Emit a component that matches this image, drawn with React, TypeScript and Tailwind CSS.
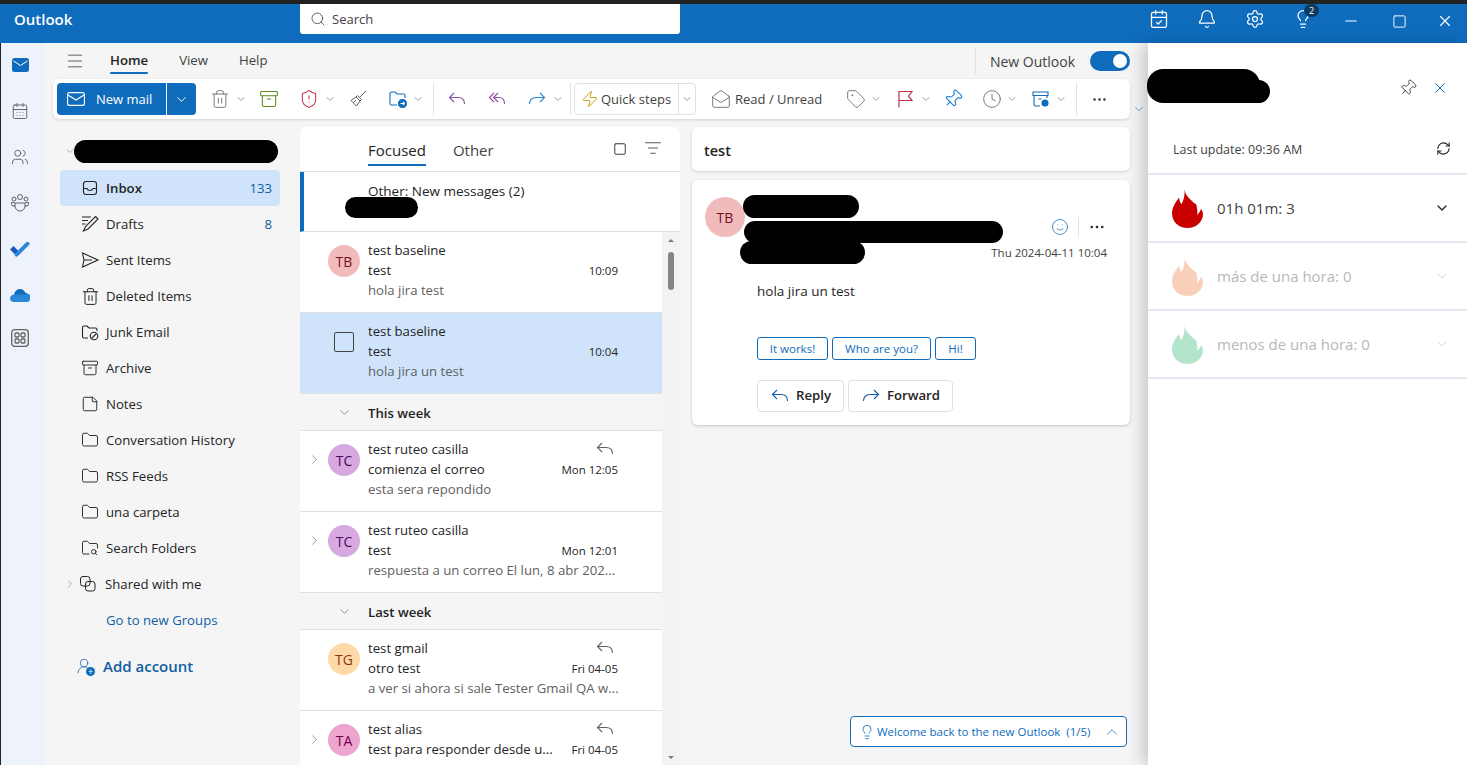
import React from 'react'
import {
  Archive, Bell, CalendarCheck, CalendarDays, ChevronDown, ChevronRight, ChevronUp, Clock, Ellipsis,
  Folder, FolderSearch, Lightbulb, ListFilter, MailOpen, Menu, Minus, Pin, RefreshCw, Search,
  Settings, ShieldAlert, Smile, Square, StickyNote, Tag, Trash2, UserRound, Users, X, Zap,
} from 'lucide-react'

const Chev = ({ className = '' }: { className?: string }) => (
  <ChevronDown size={12} strokeWidth={1.25} className={`text-[#616161] ${className}`} />
)

const ReplyIcon = ({ className = '' }: { className?: string }) => (
  <svg width="20" height="20" viewBox="0 0 20 20" fill="none" stroke="currentColor" strokeWidth="1.1" className={className}>
    <path d="M7 4 2.5 8.5 7 13M2.5 8.5H11c4 0 6.5 2.5 6.5 6.5" />
  </svg>
)

const ForwardIcon = ({ className = '' }: { className?: string }) => (
  <svg width="20" height="20" viewBox="0 0 20 20" fill="none" stroke="currentColor" strokeWidth="1.1" className={className}>
    <path d="M13 4l4.5 4.5L13 13M17.5 8.5H9c-4 0-6.5 2.5-6.5 6.5" />
  </svg>
)

const Flame = ({ color }: { color: string }) => (
  <svg width="31" height="39" viewBox="0 0 31 39" className="shrink-0">
    <path
      fill={color}
      d="M12.5 0C13 6 17 9 21 13c5 4 10 7 10 12 0 8-7 14-15.5 14C7 39 0 33 0 24.5 0 18 4 13 7 8.5c.5 2.5 1 5.5 2.5 6.5C12 11 13 5 12.5 0Z"
    />
    <path fill="#fff" d="M24 15c1 4 2 7 1 11 2-2 3.500-4 4.200-6.500C27.500 18 25.500 16.500 24 15Z" />
  </svg>
)

const line = { fill: 'none', stroke: 'currentColor', strokeWidth: 1.1 }

const folders = [
  {
    name: 'Inbox',
    icon: (
      <svg width="18" height="18" viewBox="0 0 18 18" {...line}>
        <rect x="2.500" y="2.500" width="13" height="13" rx="2.500" />
        <path d="M2.500 9.500h3.500c.5 1.500 1.500 2 3 2s2.500-.5 3-2h3.500" />
      </svg>
    ),
    count: '133',
    active: true,
  },
  {
    name: 'Drafts',
    icon: (
      <svg width="20" height="20" viewBox="0 0 20 20" {...line}>
        <path d="M2 3h9M2 6.500h6M2 10h3.500" />
        <path d="M15.500 2.500 18 5 8 15l-4.500 2L5.500 12.500Z" />
      </svg>
    ),
    count: '8',
  },
  {
    name: 'Sent Items',
    icon: (
      <svg width="20" height="20" viewBox="0 0 20 20" {...line}>
        <path d="M2.500 3 18 10 2.500 17 4 10ZM4 10h8" />
      </svg>
    ),
  },
  { name: 'Deleted Items', icon: <Trash2 size={19} strokeWidth={1.25} /> },
  {
    name: 'Junk Email',
    icon: (
      <svg width="18" height="18" viewBox="0 0 18 18" {...line}>
        <path d="M7 15H3a1.500 1.500 0 0 1-1.500-1.500v-9A1.500 1.500 0 0 1 3 3h3l2 2h6.500A1.500 1.500 0 0 1 16 6.500V8" />
        <circle cx="13" cy="13" r="3.800" />
        <path d="m10.500 15.500 5-5" />
      </svg>
    ),
  },
  { name: 'Archive', icon: <Archive size={18} strokeWidth={1.25} /> },
  { name: 'Notes', icon: <StickyNote size={18} strokeWidth={1.25} /> },
  { name: 'Conversation History', icon: <Folder size={18} strokeWidth={1.25} /> },
  { name: 'RSS Feeds', icon: <Folder size={18} strokeWidth={1.25} /> },
  { name: 'una carpeta', icon: <Folder size={18} strokeWidth={1.25} /> },
  { name: 'Search Folders', icon: <FolderSearch size={18} strokeWidth={1.25} /> },
]

type Mail = { initials: string; bg: string; fg: string; from: string; subject: string; time: string; preview: string; chevron?: boolean; replied?: boolean; selected?: boolean }

const Avatar = ({ m }: { m: Mail }) => (
  <div className={`mt-[13px] flex h-8 w-8 items-center justify-center rounded-full text-[14px] ${m.bg} ${m.fg}`}>{m.initials}</div>
)

const Row = ({ m }: { m: Mail }) => (
  <div className={`flex h-[81px] shrink-0 border-b border-[#e0e0e0] pr-[44px] ${m.selected ? 'bg-[#cfe4fa]' : 'bg-white'}`}>
    <div className="flex w-[28px] justify-center pt-[21px]">
      {m.chevron && <ChevronRight size={15} strokeWidth={1} className="text-[#616161]" />}
    </div>
    <div className="w-[40px]">
      {m.selected ? <div className="ml-[6px] mt-[19px] h-5 w-5 rounded-[2px] border border-[#424242]" /> : <Avatar m={m} />}
    </div>
    <div className="min-w-0 flex-1 pt-2 text-[13.200px] leading-5 text-[#242424]">
      <div className="flex h-5 items-center justify-between">
        <span>{m.from}</span>
        {m.replied && <ReplyIcon className="mr-[3px] text-[#616161]" />}
      </div>
      <div className="flex h-5 items-center justify-between">
        <span>{m.subject}</span>
        <span className="pt-[1px] text-[11.500px]">{m.time}</span>
      </div>
      <div className="h-5 whitespace-nowrap text-[#616161]">{m.preview}</div>
    </div>
  </div>
)

const GroupHead = ({ label }: { label: string }) => (
  <div className="flex h-[37px] shrink-0 items-center border-b border-[#e0e0e0] bg-[#f5f5f5]">
    <div className="flex w-[68px] justify-end pr-[16px]">
      <ChevronDown size={15} strokeWidth={1} className="text-[#616161]" />
    </div>
    <span className="pt-[3px] text-[13.200px] font-semibold text-[#242424]">{label}</span>
  </div>
)

const mailsA: Mail[] = [
  { initials: 'TB', bg: 'bg-[#f1bbbc]', fg: 'text-[#750b1c]', from: 'test baseline', subject: 'test', time: '10:09', preview: 'hola jira test' },
  { initials: 'TB', bg: 'bg-[#f1bbbc]', fg: 'text-[#750b1c]', from: 'test baseline', subject: 'test', time: '10:04', preview: 'hola jira un test', selected: true },
]
const mailsB: Mail[] = [
  { initials: 'TC', bg: 'bg-[#d8a9e0]', fg: 'text-[#4a0a5e]', from: 'test ruteo casilla', subject: 'comienza el correo', time: 'Mon 12:05', preview: 'esta sera repondido', chevron: true, replied: true },
  { initials: 'TC', bg: 'bg-[#d8a9e0]', fg: 'text-[#4a0a5e]', from: 'test ruteo casilla', subject: 'test', time: 'Mon 12:01', preview: 'respuesta a un correo El lun, 8 abr 202...', chevron: true },
]
const mailsC: Mail[] = [
  { initials: 'TG', bg: 'bg-[#ffd9a8]', fg: 'text-[#8a3707]', from: 'test gmail', subject: 'otro test', time: 'Fri 04-05', preview: 'a ver si ahora si sale Tester Gmail QA w...', replied: true },
  { initials: 'TA', bg: 'bg-[#eda5d0]', fg: 'text-[#77004d]', from: 'test alias', subject: 'test para responder desde u...', time: 'Fri 04-05', preview: '', chevron: true, replied: true },
]

const Section = ({ color, label, dim }: { color: string; label: string; dim?: boolean }) => (
  <div className="flex h-[68px] items-center border-b-2 border-[#e4e8f0] pl-[24px] pr-[17px]">
    <Flame color={color} />
    <span className={`ml-[14px] flex-1 text-[15px] ${dim ? 'text-[#b8b8b8]' : 'text-[#424242]'}`}>{label}</span>
    <ChevronDown size={16} strokeWidth={dim ? 1.5 : 2} className={dim ? 'text-[#d6d6d6]' : 'text-[#242424]'} />
  </div>
)

const App = () => {
  return (
    <div className="flex h-[765px] w-[1467px] flex-col overflow-hidden bg-[#f5f5f5] font-['Open_Sans',sans-serif] text-[13.200px] text-[#242424]">
      <div className="h-[4px] shrink-0 bg-[#222222]" />

      {/* title bar */}
      <div className="flex h-[39px] shrink-0 bg-[#0f6cbd] text-white">
        <div className="w-[300px] pl-[14px] pt-[4px] text-[15px] font-semibold">Outlook</div>
        <div className="flex h-[30px] w-[380px] items-center rounded-b-[3px] bg-white pl-[10px] text-[#424242]">
          <Search size={16} strokeWidth={1.25} />
          <span className="ml-[6px] pt-[1px] text-[13px]">Search</span>
        </div>
        <div className="flex-1" />
        <div className="flex w-[332px]">
          {[<CalendarCheck size={20} strokeWidth={1.5} />, <Bell size={20} strokeWidth={1.5} />, <Settings size={20} strokeWidth={1.5} />].map((ic, i) => (
            <div key={i} className="flex h-[30px] w-[48px] items-center justify-center">{ic}</div>
          ))}
          <div className="relative flex h-[30px] w-[48px] items-center justify-center">
            <Lightbulb size={20} strokeWidth={1.5} />
            <span className="absolute left-[25px] top-0 flex h-[13px] w-[15px] items-center justify-center rounded-full bg-[#0c3b5e] text-[9px]">2</span>
          </div>
          <div className="flex h-[34px] w-[48px] items-center justify-center"><Minus size={18} strokeWidth={1.5} /></div>
          <div className="flex h-[34px] w-[48px] items-center justify-center"><Square size={15} strokeWidth={1.5} /></div>
          <div className="flex h-[34px] w-[44px] items-center justify-center"><X size={18} strokeWidth={1.5} /></div>
        </div>
      </div>

      <div className="flex min-h-0 flex-1">
        {/* app rail */}
        <div className="flex w-[45px] shrink-0 flex-col items-center border-l border-[#222222] bg-[#eef3fb] pr-[6px] pt-[12px] text-[#616161]">
          <div className="flex h-[20px] items-center">
            <svg width="17" height="14" viewBox="0 0 17 14">
              <rect width="17" height="14" rx="2.500" fill="#0f6cbd" />
              <path d="M1.500 3 8.500 7.500 15.500 3" fill="none" stroke="#fff" strokeWidth="1" />
            </svg>
          </div>
          <div className="mt-[26px] flex h-[20px] items-center"><CalendarDays size={18} strokeWidth={1.25} /></div>
          <div className="mt-[26px] flex h-[20px] items-center"><Users size={18} strokeWidth={1.25} /></div>
          <div className="mt-[26px] flex h-[20px] items-center">
            <svg width="20" height="20" viewBox="0 0 20 20" fill="none" stroke="currentColor" strokeWidth="1">
              <circle cx="10" cy="4" r="2.500" />
              <circle cx="4" cy="6" r="2" />
              <circle cx="16" cy="6" r="2" />
              <path d="M5 10h10v3a5 5 0 0 1-10 0v-3ZM5 13H3a1.500 1.500 0 0 1-1.500-1.500V9.500h3M15 13h2a1.500 1.500 0 0 0 1.500-1.500V9.500h-3" />
            </svg>
          </div>
          <div className="mt-[26px] flex h-[20px] items-center">
            <svg width="20" height="16" viewBox="0 0 20 16">
              <path d="M0 8.500 3.500 5 8 9.500 6 13 4.500 13Z" fill="#185abd" />
              <path d="M4.500 13 16 1.500c1-1 2-1 3 0s1 1.500 0 2.500L8 15c-1 1-2 1-3 0Z" fill="#2b88d8" />
            </svg>
          </div>
          <div className="mt-[26px] flex h-[20px] items-center">
            <svg width="20" height="14" viewBox="0 0 20 14">
              <path d="M4 7c.5-3.500 3-6 6-6 2.500 0 4.500 1.500 5 3.500C17.500 5 20 7 20 10H4Z" fill="#0f6cbd" />
              <path d="M0 10.500C0 8 2 6.500 4.500 6.500H20V11c0 1.500-1 3-3 3H3.500C1.500 14 0 12.500 0 10.500Z" fill="#2b88d8" />
            </svg>
          </div>
          <div className="mt-[23px] flex h-[20px] items-center">
            <svg width="18" height="18" viewBox="0 0 18 18" fill="none" stroke="currentColor" strokeWidth="1.300">
              <rect x=".7" y=".7" width="16.600" height="16.600" rx="3" />
              <rect x="4" y="4" width="4" height="4" rx="1" />
              <rect x="10" y="4" width="4" height="4" rx="1" />
              <rect x="4" y="10" width="4" height="4" rx="1" />
              <rect x="10" y="10" width="4" height="4" rx="1" />
            </svg>
          </div>
        </div>

        {/* middle column */}
        <div className="flex w-[1103px] shrink-0 flex-col">
          <div className="flex h-[36px] shrink-0 items-center text-[#242424]">
            <Menu size={20} strokeWidth={1} className="ml-[20px] text-[#424242]" />
            <div className="relative ml-[25px] font-semibold">
              Home
              <div className="absolute -bottom-[3px] left-0 h-[2px] w-full rounded bg-[#0f6cbd]" />
            </div>
            <span className="ml-[31px] text-[#424242]">View</span>
            <span className="ml-[31px] text-[#424242]">Help</span>
            <div className="ml-auto h-[26px] border-l border-[#e0e0e0]" />
            <span className="ml-[14px] text-[14px] font-medium text-[#424242]">New Outlook</span>
            <div className="ml-[15px] mr-[18px] flex h-[20px] w-[40px] items-center justify-end rounded-full bg-[#0f6cbd] pr-[3px]">
              <div className="h-[14px] w-[14px] rounded-full bg-white" />
            </div>
          </div>

          {/* ribbon */}
          <div className="flex shrink-0 items-start">
            <div className="ml-[8px] flex h-[40px] w-[1077px] items-center rounded-md bg-white pl-[4px] shadow-[0_1px_3px_rgba(0,0,0,0.15)]">
              <div className="flex h-[32px] w-[139px] rounded-[4px] bg-[#0f6cbd] text-white">
                <div className="flex w-[110px] items-center border-r border-white pl-[10px]">
                  <svg width="18" height="14" viewBox="0 0 18 14" fill="none" stroke="currentColor" strokeWidth="1.100">
                    <rect x=".6" y=".6" width="16.800" height="12.800" rx="2" />
                    <path d="M1 3l8 5 8-5" />
                  </svg>
                  <span className="ml-[11px] pt-[2px] text-[13px] font-medium">New mail</span>
                </div>
                <div className="flex flex-1 items-center justify-center"><ChevronDown size={15} strokeWidth={1.5} /></div>
              </div>
              <Trash2 size={20} strokeWidth={1} className="ml-[14px] text-[#616161]" />
              <Chev className="ml-[5px]" />
              <Archive size={20} strokeWidth={1.25} className="ml-[12px] text-[#5c8a1e]" />
              <ShieldAlert size={20} strokeWidth={1.25} className="ml-[20px] text-[#c4314b]" />
              <Chev className="ml-[5px]" />
              <svg width="20" height="20" viewBox="0 0 20 20" fill="none" stroke="#616161" strokeWidth="1" className="ml-[12px]">
                <path d="M18 2 11.500 8.500M9.500 6.500l4 4-1.500 1.500-4-4ZM8 8 3 11.500 8.500 17 12 12M5.500 13.500 8 11" />
              </svg>
              <svg width="20" height="20" viewBox="0 0 20 20" fill="none" stroke="#0f6cbd" strokeWidth="1.100" className="ml-[20px]">
                <path d="M9 16H3.500A1.500 1.500 0 0 1 2 14.500v-10A1.500 1.500 0 0 1 3.500 3H7l2 2h6.500A1.500 1.500 0 0 1 17 6.500V9" />
                <circle cx="14.500" cy="14.500" r="4" fill="#0f6cbd" />
                <path d="M12.500 14.500h4M15 13l1.500 1.500L15 16" stroke="#fff" />
              </svg>
              <Chev className="ml-[4px]" />
              <div className="ml-[9px] h-[32px] border-l border-[#e0e0e0]" />
              <ReplyIcon className="ml-[13px] text-[#8e4aa8]" />
              <svg width="20" height="20" viewBox="0 0 20 20" fill="none" stroke="#8e4aa8" strokeWidth="1.100" className="ml-[20px]">
                <path d="M7 4 2.500 8.500 7 13M11 4 6.500 8.500 11 13M6.500 8.500H12c3.500 0 5.500 2.500 5.500 6.500" />
              </svg>
              <ForwardIcon className="ml-[20px] text-[#2b88d8]" />
              <Chev className="ml-[5px]" />
              <div className="ml-[6px] h-[32px] border-l border-[#e0e0e0]" />
              <div className="ml-[3px] flex h-[32px] w-[122px] items-center rounded-[4px] border border-[#e0e0e0] pl-[6px]">
                <Zap size={18} strokeWidth={1.25} className="text-[#c19c00]" />
                <span className="ml-[2px] w-[77px] whitespace-nowrap pt-[2px] text-[13px] text-[#424242]">Quick steps</span>
                <div className="flex h-full flex-1 items-center justify-center border-l border-[#e0e0e0]"><Chev /></div>
              </div>
              <MailOpen size={20} strokeWidth={1} className="ml-[15px] text-[#616161]" />
              <span className="ml-[4px] w-[89px] whitespace-nowrap pt-[2px] text-[13px] text-[#424242]">Read / Unread</span>
              <Tag size={20} strokeWidth={1} className="ml-[22px] text-[#616161]" />
              <Chev className="ml-[4px]" />
              <svg width="20" height="20" viewBox="0 0 20 20" fill="none" stroke="#c4314b" strokeWidth="1.200" className="ml-[13px]">
                <path d="M4 18.500V2.500h13l-3.500 4.700L17 11.500H4" />
              </svg>
              <Chev className="ml-[5px]" />
              <Pin size={20} strokeWidth={1.25} className="ml-[11px] rotate-45 text-[#0f78d4]" />
              <Clock size={20} strokeWidth={1} className="ml-[19px] text-[#616161]" />
              <Chev className="ml-[4px]" />
              <svg width="20" height="20" viewBox="0 0 20 20" fill="none" stroke="#0f6cbd" strokeWidth="1.100" className="ml-[13px]">
                <path d="M2 3h15v3.500H2ZM3 6.500v9A1.500 1.500 0 0 0 4.500 17H9M16 6.500V9M7.500 10h3" />
                <circle cx="14" cy="14" r="3" fill="#0f6cbd" />
              </svg>
              <Chev className="ml-[4px]" />
              <div className="ml-[9px] h-[32px] border-l border-[#e0e0e0]" />
              <Ellipsis size={17} strokeWidth={1.5} className="ml-[14px] text-[#242424]" />
            </div>
            <ChevronDown size={14} strokeWidth={1} className="ml-[2px] mt-[23px] text-[#0f6cbd]" />
          </div>

          <div className="mt-[8px] flex min-h-0 flex-1">
            {/* folders */}
            <div className="w-[255px] shrink-0">
              <div className="flex h-[43px] items-start pl-[19px]">
                <ChevronDown size={12} strokeWidth={1} className="mt-[18px] text-[#616161]" />
                <div className="-ml-[2px] mt-[13px] h-[23px] w-[204px] rounded-full bg-black" />
              </div>
              {folders.map((f) => (
                <div
                  key={f.name}
                  className={`ml-[15px] flex h-[36px] w-[220px] items-center rounded-[4px] pl-[20px] pr-[8px] ${f.active ? 'bg-[#cfe4fa] font-semibold' : ''}`}
                >
                  <span className="flex w-[20px] justify-center text-[#242424]">{f.icon}</span>
                  <span className="ml-[6px] flex-1 whitespace-nowrap pt-[2px]">{f.name}</span>
                  {f.count && <span className="pt-[2px] font-normal text-[#115ea3]">{f.count}</span>}
                </div>
              ))}
              <div className="ml-[15px] flex h-[36px] w-[220px] items-center">
                <ChevronRight size={12} strokeWidth={1} className="ml-[4px] text-[#616161]" />
                <svg width="18" height="18" viewBox="0 0 18 18" fill="none" stroke="currentColor" strokeWidth="1" className="ml-[3px]">
                  <rect x="1.500" y="1.500" width="9.500" height="9.500" rx="2.500" />
                  <rect x="6.500" y="6.500" width="9.500" height="9.500" rx="2.500" />
                </svg>
                <span className="ml-[8px] pt-[2px]">Shared with me</span>
              </div>
              <div className="ml-[15px] flex h-[36px] w-[220px] items-center pl-[46px] pt-[2px] text-[#115ea3]">Go to new Groups</div>
              <div className="ml-[30px] mt-[10px] flex h-[36px] items-center text-[#115ea3]">
                <span className="relative">
                  <UserRound size={18} strokeWidth={1} />
                  <span className="absolute -bottom-[1px] -right-[2px] flex h-[9px] w-[9px] items-center justify-center rounded-full bg-[#0f6cbd] text-[9px] leading-none text-white">+</span>
                </span>
                <span className="ml-[10px] text-[15px] font-semibold">Add account</span>
              </div>
            </div>

            {/* message list */}
            <div className="relative flex w-[380px] shrink-0 flex-col rounded-t-md bg-white">
              <div className="flex h-[45px] shrink-0 border-b border-[#e0e0e0] pl-[68px]">
                <div className="relative mt-[12px] h-[25px] text-[15px] font-medium">
                  Focused
                  <div className="absolute -bottom-[2px] left-0 h-[2px] w-full bg-[#0f6cbd]" />
                </div>
                <span className="ml-[27px] mt-[12px] text-[15px] text-[#424242]">Other</span>
                <Square size={14} strokeWidth={1.5} className="ml-[119px] mt-[15px]" />
                <ListFilter size={18} strokeWidth={1} className="ml-[17px] mt-[12px]" />
              </div>
              <div className="flex h-[60px] shrink-0 border-b border-[#e0e0e0] border-l-4 border-l-[#0f6cbd] pl-[64px] pt-[9px] text-[13.500px] font-medium">
                Other: New messages (2)
              </div>
              <div className="absolute left-[45px] top-[70px] h-[21px] w-[73px] rounded-full bg-black" />
              <div className="flex min-h-0 flex-1">
                <div className="w-[362px] shrink-0 overflow-hidden">
                  {mailsA.map((m, i) => <Row key={i} m={m} />)}
                  <GroupHead label="This week" />
                  {mailsB.map((m, i) => <Row key={i} m={m} />)}
                  <GroupHead label="Last week" />
                  {mailsC.map((m, i) => <Row key={i} m={m} />)}
                </div>
                <div className="flex flex-1 flex-col items-center justify-between bg-[#f3f3f3] pb-[6px] pt-[7px]">
                  <div className="flex flex-col items-center">
                    <div className="h-0 w-0 border-x-[3px] border-b-[3px] border-x-transparent border-b-[#7a7a7a]" />
                    <div className="mt-[10px] h-[38px] w-[6px] rounded-full bg-[#858585]" />
                  </div>
                  <div className="h-0 w-0 border-x-[3px] border-t-[3px] border-x-transparent border-t-[#7a7a7a]" />
                </div>
              </div>
            </div>

            {/* reading pane */}
            <div className="ml-[12px] flex w-[438px] shrink-0 flex-col">
              <div className="flex h-[44px] shrink-0 items-center rounded-md bg-white pl-[12px] pt-[3px] text-[14.500px] font-semibold shadow-[0_1px_3px_rgba(0,0,0,0.15)]">test</div>
              <div className="relative mt-[9px] h-[245px] shrink-0 rounded-md bg-white shadow-[0_1px_3px_rgba(0,0,0,0.2)]">
                <div className="flex h-[90px] justify-between pl-[13px] pr-[23px] pt-[17px]">
                  <div className="flex h-10 w-10 items-center justify-center rounded-full bg-[#f1bbbc] text-[14px] text-[#750b1c]">TB</div>
                  <div className="flex flex-col items-end">
                    <div className="mt-[20px] flex h-5 items-center">
                      <Smile size={18} strokeWidth={1} className="text-[#0f6cbd]" />
                      <div className="ml-[9px] h-[20px] border-l border-[#e0e0e0]" />
                      <Ellipsis size={18} strokeWidth={1.5} className="ml-[9px] mr-[1px]" />
                    </div>
                    <div className="mt-[8px] text-[11.500px] leading-4 text-[#424242]">Thu 2024-04-11 10:04</div>
                  </div>
                </div>
                <div className="absolute left-[51px] top-[15px] h-[23px] w-[116px] rounded-full bg-black" />
                <div className="absolute left-[52px] top-[41px] h-[22px] w-[259px] rounded-full bg-black" />
                <div className="absolute left-[48px] top-[61px] h-[23px] w-[125px] rounded-full bg-black" />
                <div className="pl-[65px] pt-[11px]">
                  <div className="h-5 text-[13.500px] leading-5">hola jira un test</div>
                  <div className="mt-[36px] flex h-[23px] text-[11.500px] text-[#0f6cbd]">
                    <div className="flex w-[71px] items-center justify-center rounded-[3px] border border-[#0f6cbd]">It works!</div>
                    <div className="ml-[4px] flex w-[99px] items-center justify-center rounded-[3px] border border-[#0f6cbd]">Who are you?</div>
                    <div className="ml-[4px] flex w-[41px] items-center justify-center rounded-[3px] border border-[#0f6cbd]">Hi!</div>
                  </div>
                  <div className="mt-[20px] flex h-[32px] font-semibold">
                    <div className="flex w-[87px] items-center justify-center rounded-[4px] border border-[#e0e0e0]">
                      <ReplyIcon className="mr-[6px] text-[#115ea3]" />Reply
                    </div>
                    <div className="ml-[4px] flex w-[105px] items-center justify-center rounded-[4px] border border-[#e0e0e0]">
                      <ForwardIcon className="mr-[6px] text-[#115ea3]" />Forward
                    </div>
                  </div>
                </div>
              </div>
              <div className="mb-[18px] mr-[3px] mt-auto flex h-[31px] w-[277px] items-center self-end rounded-[4px] border border-[#0f6cbd] bg-white pl-[8px] text-[11.500px] text-[#0f6cbd]">
                <Lightbulb size={16} strokeWidth={1.25} />
                <span className="ml-[2px] flex-1 whitespace-nowrap">Welcome back to the new Outlook&nbsp; (1/5)</span>
                <ChevronUp size={18} strokeWidth={1} className="mr-[5px]" />
              </div>
            </div>
          </div>
        </div>

        {/* add-in panel */}
        <div className="relative flex-1 bg-white shadow-[-6px_0_14px_rgba(0,0,0,0.18)]">
          <div className="flex h-[90px] items-start justify-end pr-[18px] pt-[36px]">
            <Pin size={18} strokeWidth={1.25} className="rotate-45 text-[#424242]" />
            <X size={18} strokeWidth={1.25} className="ml-[14px] text-[#0f6cbd]" />
          </div>
          <div className="absolute -left-[1px] top-[26px] h-[34px] w-[113px] rounded-[16px] bg-black" />
          <div className="absolute left-[52px] top-[37px] h-[23px] w-[70px] rounded-full bg-black" />
          <div className="flex h-[41px] items-start pl-[25px] pr-[16px] pt-[8px]">
            <span className="flex-1 text-[12.500px] text-[#424242]">Last update: 09:36 AM</span>
            <RefreshCw size={15} strokeWidth={1.75} className="text-[#242424]" />
          </div>
          <div className="-mt-[1px] border-t-2 border-[#e4e8f0]">
            <Section color="#c80000" label="01h 01m: 3" />
            <Section color="#f9cfb9" label="más de una hora: 0" dim />
            <Section color="#b3e5cd" label="menos de una hora: 0" dim />
          </div>
        </div>
      </div>
    </div>
  )
}

export default App
